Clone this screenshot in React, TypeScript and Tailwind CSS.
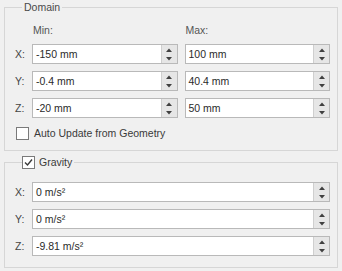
import React from 'react';

const domainRows = [
  { axis: 'X', min: '-150 mm', max: '100 mm' },
  { axis: 'Y', min: '-0.4 mm', max: '40.4 mm' },
  { axis: 'Z', min: '-20 mm', max: '50 mm' },
];

const gravityRows = [
  { axis: 'X', value: '0 m/s²' },
  { axis: 'Y', value: '0 m/s²' },
  { axis: 'Z', value: '-9.81 m/s²' },
];

function SpinBox({ value }: { value: string }) {
  return (
    <div className="flex h-[20px] border border-[#b9b9b9] bg-white">
      <span className="flex-1 flex items-center pl-[3px] text-[#2a2a2a] truncate">{value}</span>
      <div className="w-[16px] flex flex-col bg-[#e6e6e6] border-l border-[#cfcfcf]">
        <div className="flex-1 flex items-center justify-center">
          <svg width="6" height="4" viewBox="0 0 6 4">
            <path d="M0 4 L3 0.5 L6 4 Z" fill="#404040" />
          </svg>
        </div>
        <div className="flex-1 flex items-center justify-center">
          <svg width="6" height="4" viewBox="0 0 6 4">
            <path d="M0 0 L3 3.5 L6 0 Z" fill="#404040" />
          </svg>
        </div>
      </div>
    </div>
  );
}

function CheckBox({ checked }: { checked?: boolean }) {
  return (
    <span className="w-[13px] h-[13px] border border-[#7a7a7a] bg-white flex items-center justify-center shrink-0">
      {checked && (
        <svg width="9" height="9" viewBox="0 0 9 9">
          <path d="M1 4.5 L3.5 7 L8 1.5" stroke="#3a3a3a" strokeWidth="1.4" fill="none" />
        </svg>
      )}
    </span>
  );
}

export default function App() {
  return (
    <div
      className="w-[342px] h-[271px] bg-[#f0f0f0] px-[4px] pt-[1px] text-[10.5px] leading-[13px] text-[#3c3c3c]"
      style={{ fontFamily: '"Liberation Sans", Arial, sans-serif' }}
    >
      <fieldset className="border border-[#d6d6d6] h-[150px] pl-[10px] pr-[7px]">
        <legend className="ml-[7px] px-[2px] text-[#4a4a4a]">Domain</legend>
        <div className="grid grid-cols-[10px_1fr_1fr] gap-x-[7px] gap-y-[7px] mt-[10px] items-center">
          <span />
          <span className="pl-[1px] text-[#555]">Min:</span>
          <span className="pl-[1px] text-[#555]">Max:</span>
          {domainRows.map((row) => (
            <React.Fragment key={row.axis}>
              <span className="text-[#444]">{row.axis}:</span>
              <SpinBox value={row.min} />
              <SpinBox value={row.max} />
            </React.Fragment>
          ))}
        </div>
        <label className="flex items-center gap-[5px] mt-[9px] ml-[1px]">
          <CheckBox />
          <span className="text-[#3a3a3a]">Auto Update from Geometry</span>
        </label>
      </fieldset>

      <fieldset className="border border-[#d6d6d6] h-[112px] mt-[5px] pl-[10px] pr-[7px]">
        <legend className="ml-[7px] pr-[2px] flex items-center gap-[4px]">
          <CheckBox checked />
          <span className="text-[#3a3a3a]">Gravity</span>
        </legend>
        <div className="grid grid-cols-[10px_1fr] gap-x-[7px] gap-y-[7px] mt-[13px] items-center">
          {gravityRows.map((row) => (
            <React.Fragment key={row.axis}>
              <span className="text-[#444]">{row.axis}:</span>
              <SpinBox value={row.value} />
            </React.Fragment>
          ))}
        </div>
      </fieldset>
    </div>
  );
}
